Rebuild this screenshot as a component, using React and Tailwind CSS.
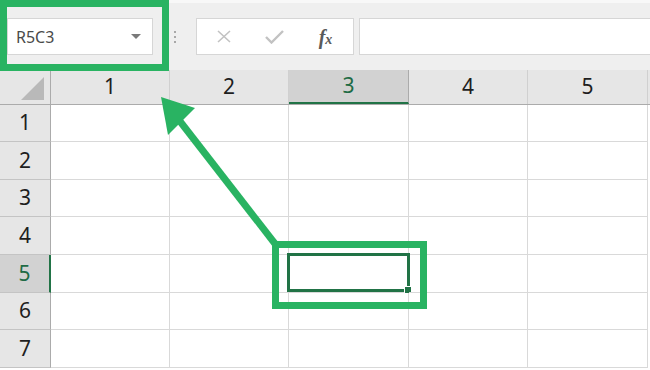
import React from 'react';

const cols = [
  { label: '1', w: 'w-[119px]' },
  { label: '2', w: 'w-[119px]' },
  { label: '3', w: 'w-[120px]', selected: true },
  { label: '4', w: 'w-[119px]' },
  { label: '5', w: 'w-[120px]' },
];

const rows = [
  { label: '1', h: 'h-[37px]' },
  { label: '2', h: 'h-[38px]' },
  { label: '3', h: 'h-[37px]' },
  { label: '4', h: 'h-[38px]' },
  { label: '5', h: 'h-[38px]', selected: true },
  { label: '6', h: 'h-[37px]' },
  { label: '7', h: 'h-[38px]' },
];

const App = () => {
  return (
    <div className="relative w-[650px] h-[370px] overflow-hidden bg-white font-['Noto_Sans',sans-serif]">
      {/* Formula bar */}
      <div className="h-[70px] bg-[#efefef] border-t-[3px] border-[#f8f8f8] flex items-start pt-[15px]">
        <div className="ml-[7px] w-[146px] h-[37px] bg-white border border-[#d6d6d6] flex items-center justify-between pl-[8px] pr-[11px]">
          <span className="text-[16px] text-[#4a4a4a]">R5C3</span>
          <span className="w-0 h-0 border-l-[5px] border-r-[5px] border-t-[5px] border-l-transparent border-r-transparent border-t-[#7a7a7a]"></span>
        </div>
        <div className="w-[43px] h-[37px] flex flex-col items-center justify-center gap-[3px]">
          <span className="w-[2px] h-[2px] bg-[#a8a8a8]"></span>
          <span className="w-[2px] h-[2px] bg-[#a8a8a8]"></span>
          <span className="w-[2px] h-[2px] bg-[#a8a8a8]"></span>
        </div>
        <div className="w-[158px] h-[37px] bg-white border border-[#d6d6d6] flex items-center">
          <div className="w-[53px] flex justify-center">
            <svg width="14" height="13" viewBox="0 0 14 13">
              <path d="M1 1 L13 12 M13 1 L1 12" stroke="#c2c2c2" strokeWidth="1.6" fill="none" />
            </svg>
          </div>
          <div className="w-[48px] flex justify-center">
            <svg width="19" height="14" viewBox="0 0 19 14">
              <path d="M1 7 L6.5 12.5 L18 1" stroke="#c2c2c2" strokeWidth="2.4" fill="none" />
            </svg>
          </div>
          <div className="w-[55px] flex justify-center text-[#5a5a5a] font-['Liberation_Serif',serif] italic font-bold">
            <span className="text-[20px] leading-none">f</span>
            <span className="text-[14px] leading-none mt-[6px]">x</span>
          </div>
        </div>
        <div className="ml-[5px] flex-1 h-[37px] bg-white border border-[#d6d6d6] border-r-0"></div>
      </div>

      {/* Column headers */}
      <div className="flex h-[35px] bg-[#e6e6e6] border-b border-[#ababab]">
        <div className="w-[51px] shrink-0 border-r border-[#ababab] flex items-end justify-end pr-[6px] pb-[4px]">
          <svg width="23" height="23" viewBox="0 0 23 23">
            <polygon points="23,0 23,23 0,23" fill="#b9b9b9" />
          </svg>
        </div>
        {cols.map((c) => (
          <div
            key={c.label}
            className={
              c.selected
                ? `${c.w} shrink-0 border-r border-[#ababab] bg-[#d2d2d2] border-b-2 border-b-[#217346] flex items-center justify-center text-[21px] text-[#1f6b45]`
                : `${c.w} shrink-0 border-r border-[#d0d0d0] flex items-center justify-center text-[21px] text-[#1e1e1e]`
            }
          >
            {c.label}
          </div>
        ))}
      </div>

      {/* Rows */}
      {rows.map((r) => (
        <div key={r.label} className={`flex ${r.h}`}>
          <div
            className={
              r.selected
                ? 'w-[51px] shrink-0 bg-[#d2d2d2] border-r-2 border-r-[#217346] border-b border-b-[#c4c4c4] flex items-center justify-center text-[21px] text-[#1f6b45]'
                : 'w-[51px] shrink-0 bg-[#e6e6e6] border-r border-r-[#ababab] border-b border-b-[#c4c4c4] flex items-center justify-center text-[21px] text-[#1e1e1e]'
            }
          >
            {r.label}
          </div>
          {cols.map((c) => (
            <div key={c.label} className={`${c.w} shrink-0 relative border-r border-b border-[#d9d9d9]`}>
              {r.selected && c.selected && (
                <div className="absolute -left-[2px] -top-[2px] -right-[2px] -bottom-[0px] border-[3px] border-[#217346]">
                  <span className="absolute -right-[5px] -bottom-[5px] w-[8px] h-[8px] bg-[#217346] border border-white"></span>
                </div>
              )}
            </div>
          ))}
        </div>
      ))}

      {/* Annotations */}
      <div className="absolute left-0 top-0 w-[169px] h-[71px] border-[7px] border-[#29b362]"></div>
      <div className="absolute left-[272px] top-[241px] w-[155px] h-[68px] border-[7px] border-[#29b362]"></div>
      <svg className="absolute left-0 top-0" width="650" height="370" viewBox="0 0 650 370">
        <line x1="276" y1="245" x2="172" y2="111" stroke="#29b362" strokeWidth="7" />
        <polygon points="161,97 195,108 168,135" fill="#29b362" />
      </svg>
    </div>
  );
};

export default App;
